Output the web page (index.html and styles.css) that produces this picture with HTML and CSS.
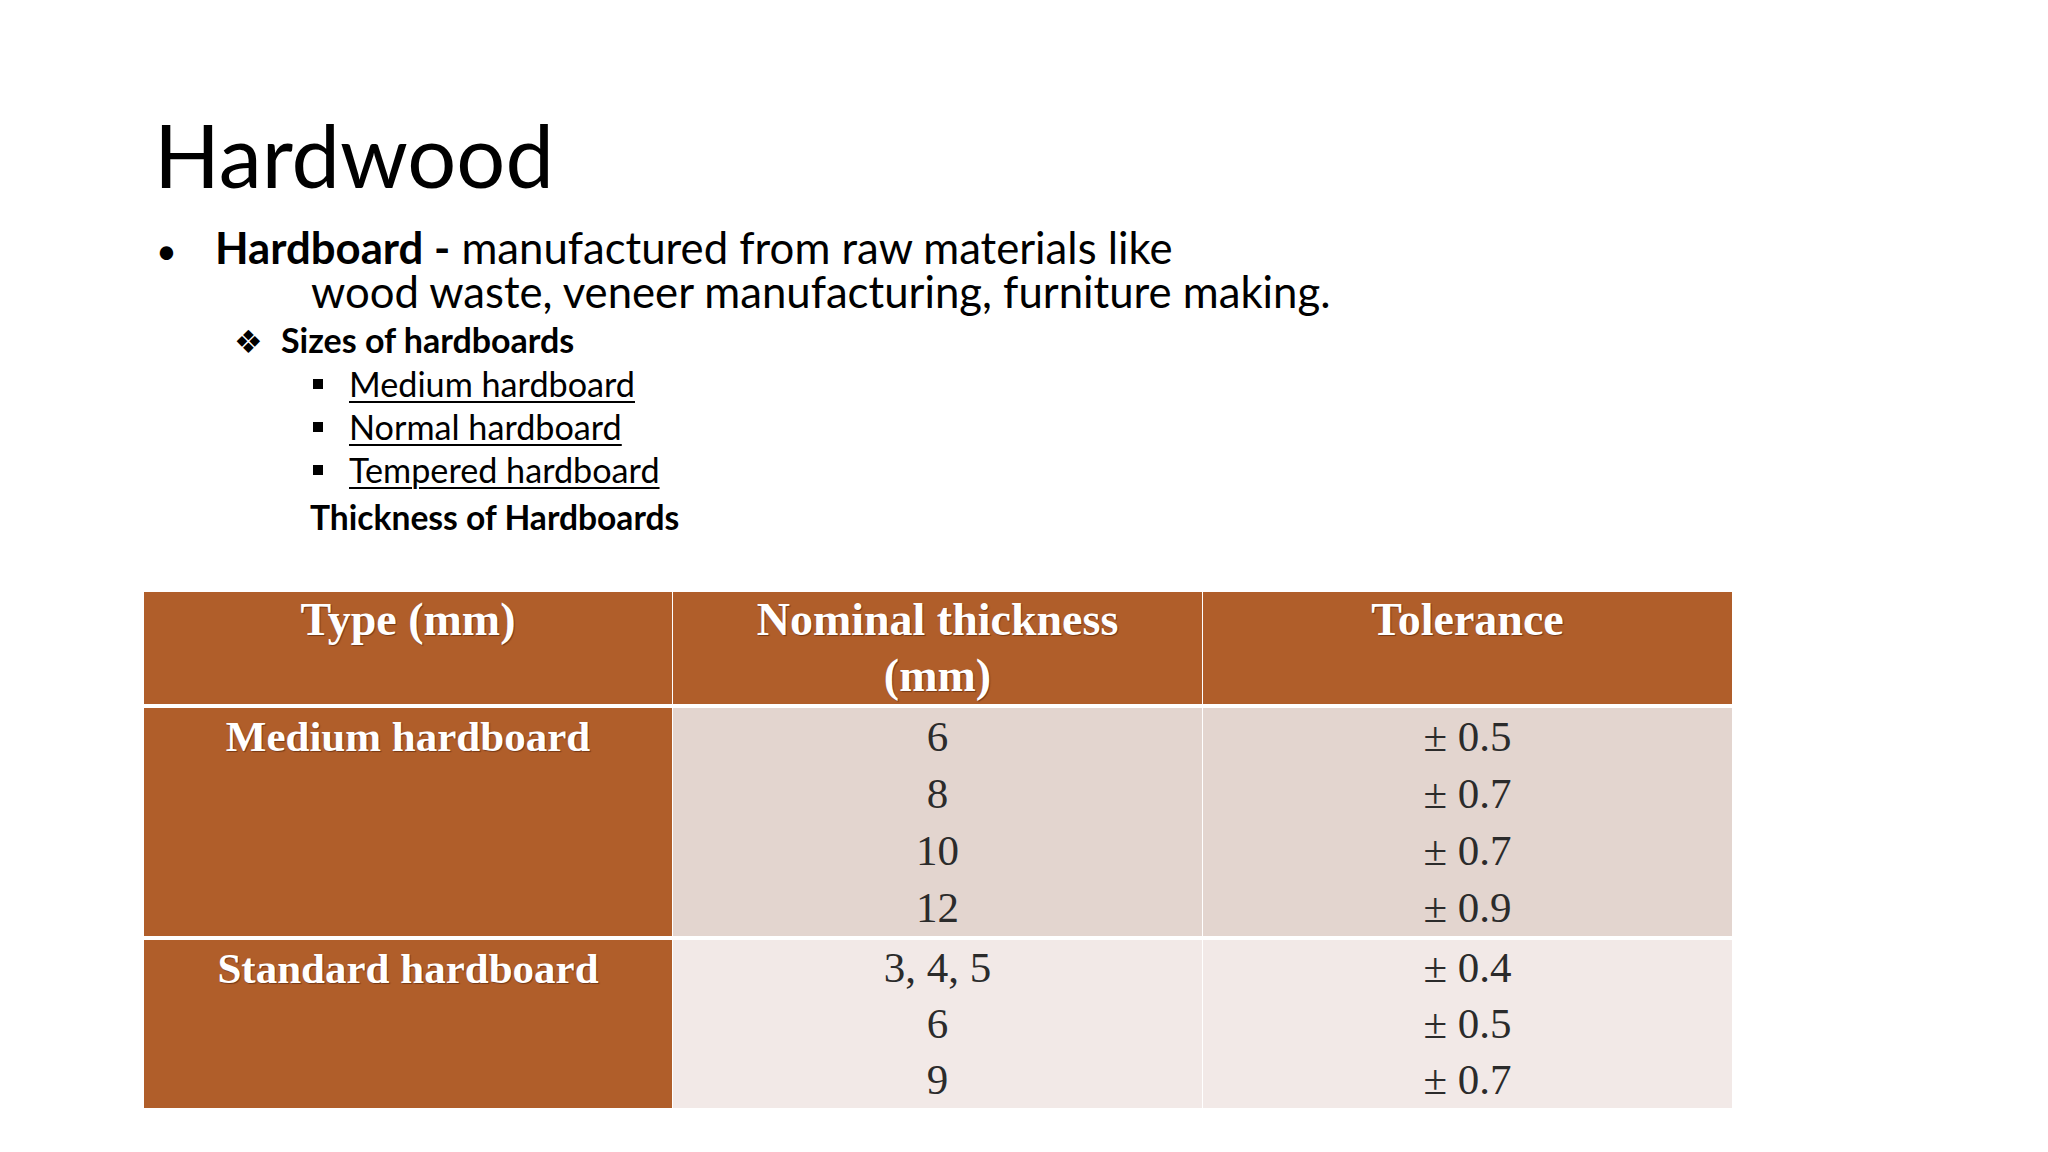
FILE: index.html
```html
<!DOCTYPE html>
<html>
<head>
<meta charset="utf-8">
<link rel="stylesheet" href="styles.css">
</head>
<body>
<div class="slide">
  <h1 class="title">Hardwood</h1>
  <div class="l1">
    <span class="dot">•</span>
    <div class="l1-text">
      <div><b>Hardboard -</b> manufactured from raw materials like</div>
      <div class="cont">wood waste, veneer manufacturing, furniture making.</div>
    </div>
  </div>
  <div class="l2">
    <span class="diamond">❖</span>
    <span class="l2-text">Sizes of hardboards</span>
  </div>
  <ul class="l3">
    <li><span class="sq"></span><span class="link">Medium hardboard</span></li>
    <li><span class="sq"></span><span class="link">Normal hardboard</span></li>
    <li><span class="sq"></span><span class="link">Tempered hardboard</span></li>
  </ul>
  <div class="thick">Thickness of Hardboards</div>

  <div class="table">
    <div class="th">Type (mm)</div>
    <div class="th">Nominal thickness<br>(mm)</div>
    <div class="th">Tolerance</div>

    <div class="type">Medium hardboard</div>
    <div class="vals med"><div>6</div><div>8</div><div>10</div><div>12</div></div>
    <div class="vals med"><div>± 0.5</div><div>± 0.7</div><div>± 0.7</div><div>± 0.9</div></div>

    <div class="type">Standard hardboard</div>
    <div class="vals std"><div>3, 4, 5</div><div>6</div><div>9</div></div>
    <div class="vals std"><div>± 0.4</div><div>± 0.5</div><div>± 0.7</div></div>
  </div>
</div>
</body>
</html>
```

FILE: styles.css
```css
html, body {
  margin: 0;
  padding: 0;
  background: #ffffff;
}

.slide {
  width: 2048px;
  height: 1152px;
  box-sizing: border-box;
  padding: 105px 0 0 0;
  font-family: Lato, "Open Sans", sans-serif;
  color: #000;
  display: flex;
  flex-direction: column;
}

.title {
  margin: 0 0 0 154px;
  font-weight: 400;
  font-size: 86.5px;
  line-height: 100px;
}

.l1 {
  display: flex;
  align-items: baseline;
  margin: 20px 0 0 156px;
  font-size: 43.7px;
  line-height: 44px;
}

.dot {
  width: 59px;
  flex: none;
  font-size: 36px;
}

.l1-text b {
  font-weight: 700;
}

.cont {
  padding-left: 96px;
}

.l2 {
  display: flex;
  align-items: baseline;
  margin: 4px 0 0 234px;
  font-size: 34px;
  line-height: 46px;
  font-weight: 700;
}

.diamond {
  font-family: "DejaVu Sans", sans-serif;
  font-size: 32px;
  width: 47px;
  font-weight: 400;
}

.l3 {
  list-style: none;
  margin: -3px 0 0 0;
  padding: 0 0 0 313px;
  font-size: 34.2px;
  line-height: 43px;
}

.l3 li {
  display: flex;
  align-items: center;
}

.sq {
  width: 10px;
  height: 10px;
  background: #000;
  margin-right: 26px;
  flex: none;
}

.link {
  text-decoration: underline;
  text-decoration-thickness: 2px;
  text-underline-offset: 4px;
}

.thick {
  margin: 4px 0 0 310px;
  font-size: 33.6px;
  line-height: 44px;
  font-weight: 700;
}

.table {
  margin: 53px 0 0 144px;
  width: 1588px;
  display: grid;
  grid-template-columns: 528px 529px 529px;
  column-gap: 1px;
  row-gap: 4px;
  font-family: "Liberation Serif", "Times New Roman", serif;
}

.th {
  background: #b05e2a;
  color: #fff;
  font-weight: 700;
  font-size: 46px;
  line-height: 56px;
  text-align: center;
  text-shadow: 1px 1px 1px rgba(60, 20, 0, 0.5);
}

.type {
  background: #b05e2a;
  color: #fff;
  font-weight: 700;
  font-size: 43px;
  line-height: 57px;
  text-align: center;
  text-shadow: 1px 1px 1px rgba(60, 20, 0, 0.5);
}

.vals {
  color: #2b2b2b;
  font-size: 43px;
  line-height: 57px;
  text-align: center;
}

.vals.med {
  background: #e3d5cf;
}

.vals.std {
  background: #f2e9e7;
  line-height: 56px;
}
```
